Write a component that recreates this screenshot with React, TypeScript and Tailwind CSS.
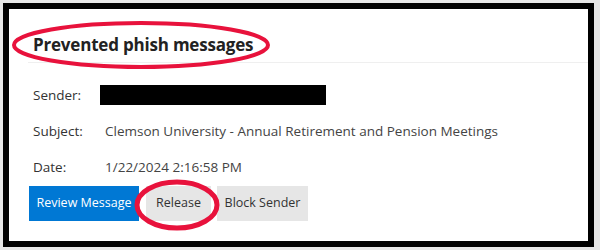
import React from "react";

export default function App() {
  return (
    <div
      className="w-[600px] h-[250px] bg-[#e6e6e6] pt-[3px] pl-[3px] relative overflow-hidden"
      style={{ fontFamily: '"Open Sans", "Noto Sans", sans-serif' }}
    >
      <div className="w-[591px] h-[244px] border-[6px] border-black bg-white flex flex-col">
        <div className="h-[54px] flex items-end pb-[9px] border-b border-[#efefef] ml-[19px] pl-[5px]">
          <h1 className="text-[17px] font-bold text-[#222] leading-none tracking-[-0.2px]">
            Prevented phish messages
          </h1>
        </div>
        <div className="pl-[24px] flex flex-col">
          <div className="h-[36px] mt-[14px] flex items-center text-[13.5px] text-[#333]">
            <span className="w-[67px]">Sender:</span>
            <span className="w-[226px] h-[20px] bg-black"></span>
          </div>
          <div className="h-[36px] flex items-center text-[13.5px] text-[#333]">
            <span className="w-[72px]">Subject:</span>
            <span className="text-[#444]">Clemson University - Annual Retirement and Pension Meetings</span>
          </div>
          <div className="h-[36px] flex items-center text-[13.5px] text-[#333]">
            <span className="w-[72px]">Date:</span>
            <span className="text-[#444]">1/22/2024 2:16:58 PM</span>
          </div>
        </div>
        <div className="flex gap-[7px] pl-[20px] mt-[1px]">
          <button className="h-[35px] w-[110px] bg-[#0078d4] text-white text-[12.5px] flex items-center justify-center">
            Review Message
          </button>
          <button className="h-[35px] w-[65px] bg-[#e6e6e6] text-[#333] text-[12.5px] flex items-center justify-center">
            Release
          </button>
          <button className="h-[35px] w-[91px] bg-[#e6e6e6] text-[#333] text-[12.5px] flex items-center justify-center -ml-[1px]">
            Block Sender
          </button>
        </div>
      </div>
      <svg className="absolute left-0 top-0 pointer-events-none" width="600" height="250">
        <ellipse cx="141" cy="45" rx="127" ry="22" fill="none" stroke="#e8123c" strokeWidth="4" />
        <ellipse cx="177" cy="205" rx="40" ry="23" fill="none" stroke="#e8123c" strokeWidth="5" />
      </svg>
    </div>
  );
}
